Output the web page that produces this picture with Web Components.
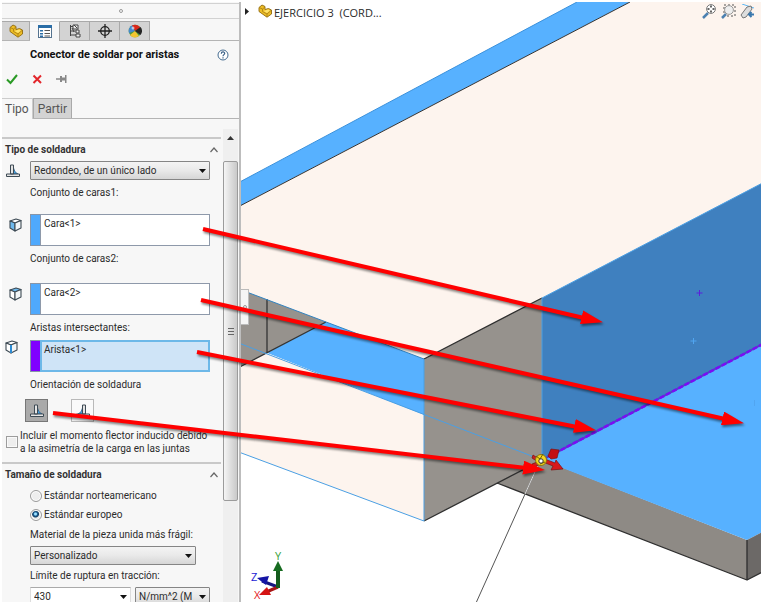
<!DOCTYPE html>
<html lang="es">
<head>
<meta charset="utf-8">
<title>Conector de soldar por aristas</title>
<style>
body{margin:0;background:#fff;font:10px/14px Roboto,"Open Sans",sans-serif;color:#2b2b2b}
</style>
</head>
<body>
<weld-app></weld-app>
<script>
function define(name, css, html) {
  const t = document.createElement('template');
  t.innerHTML = `<style>*{box-sizing:border-box}button,input,select,textarea{font:inherit;color:inherit;margin:0}button{padding:0;border:0;background:none}svg{display:block}${css}</style>${html}`;
  customElements.define(name, class extends HTMLElement {
    constructor() {
      super();
      const root = this.attachShadow({mode: 'open'});
      root.append(t.content.cloneNode(true));
      root.querySelectorAll('[data-attr]').forEach(e => {
        e.textContent = this.getAttribute(e.dataset.attr) || '';
      });
    }
  });
}

define('part-icon', `:host{display:block;width:14px;height:14px}`, `
<svg width="14" height="14" viewBox="0 0 14 14"><path d="M1 3.500 4 1l3 1.500v3l3.500-1L13.500 6v4L9 13.200 1 7.500z" fill="#edbd25" stroke="#8e6a10" stroke-width=".9"/><path d="M1.500 3.700 4.500 5v2.500L9 10l4-3.500M9 10v3M4.500 5 7 3" fill="none" stroke="#a87d12" stroke-width=".8"/><path d="m5.500 7 3.500 2 3-2.500-2-1z" fill="#ffe36b"/></svg>`);

define('manager-tabs', `
:host{display:flex;border-bottom:1px solid #b4b4b4;height:20px}
button{width:30px;height:19px;display:grid;place-items:center;background:#d3d3d3;border:1px solid #a9a9a9;border-left:0;border-bottom:0}
button:first-of-type{width:28px}
button.on{background:#f7f7f7;height:20px;border-top-color:#ddd}`, `
<button aria-label="Operaciones"><part-icon></part-icon></button>
<button class="on" aria-label="Propiedades"><svg width="14" height="13" viewBox="0 0 14 13"><rect x=".5" y=".5" width="13" height="12" fill="#fff" stroke="#55738f"/><path d="M0 0h14v3H0z" fill="#2a6da6"/><path d="M2 5h3v1.500H2zm0 3h3v1.500H2zm0 2.500h3V12H2z" fill="#2b6ea7"/><path d="M6.500 5.500H12M6.500 8.500H12M6.500 11H12" stroke="#555"/></svg></button>
<button aria-label="Configuraciones"><svg width="14" height="14" viewBox="0 0 14 14" fill="none" stroke="#444"><path d="M2.500 1v11M2.500 2.500H5M2.500 7h5M2.500 11H8"/><path d="M5 1h5v4H5zM8 6h3v3H8zM8 10h4v3H8z" fill="#eee"/><path d="m4 4 2 4M6 1l3 3"/></svg></button>
<button aria-label="Cotas"><svg width="14" height="14" viewBox="0 0 14 14" fill="none" stroke="#222" stroke-width="1.300"><circle cx="7" cy="7" r="4.300"/><path d="M7 0v14M0 7h14"/></svg></button>
<button aria-label="Visualización"><svg width="14" height="14" viewBox="0 0 14 14"><circle cx="7" cy="7" r="6.300" fill="#4c9a40"/><path d="M7 7 1 9A6.300 6.300 0 0 1 5 1z" fill="#4488cf"/><path d="M7 7 4 1.500A6.300 6.300 0 0 1 12.500 4z" fill="#d9291c"/><path d="M7 7 2 11a6.300 6.300 0 0 0 9 1z" fill="#f2c632"/><path d="m7 7 5.500-4a6 6 0 0 1 0 8z" fill="#252525"/><circle cx="5" cy="4" r="1.500" fill="#fff" opacity=".6"/></svg></button>`);

define('panel-header', `
:host{display:block}
.grip{height:16px;margin:1px 0 2px;border:solid #d2d2d2;border-width:1px 0;display:grid;place-items:center}
.grip i{width:4px;height:4px;border:1px solid #999;border-radius:50%}
.title{display:flex;align-items:center;justify-content:space-between;padding:0 10px 0 28px;height:28px}
h1{font-size:11px;line-height:16px;margin:0;color:#111}
.act{display:flex;align-items:center;gap:13px;height:20px;padding-left:4px}
.tabs{display:flex;height:21px;margin-top:9px;border-bottom:1px solid #b4b4b4;font-size:12px;color:#555}
.tabs button{height:20px;border:1px solid #a9a9a9;border-bottom:0;background:#d3d3d3;padding:0 4px}
.tabs .on{height:21px;background:#f7f7f7;border-left:0;border-color:#ccc;padding:0 3px}`, `
<div class="grip"><i></i></div>
<manager-tabs></manager-tabs>
<div class="title"><h1>Conector de soldar por aristas</h1>
<button aria-label="Ayuda"><svg width="12" height="12" viewBox="0 0 12 12" fill="none"><circle cx="6" cy="6" r="5" fill="#fff" stroke="#456c91"/><path d="M4.300 4.700C4.300 2.300 7.800 2.500 7.700 4.500 7.600 5.700 6 5.600 6 7.200M6 8.300v1.200" stroke="#365d84" stroke-width="1.200"/></svg></button></div>
<div class="act">
<button aria-label="Aceptar"><svg width="12" height="12" viewBox="0 0 12 12"><path d="m1 6.500 3.500 3.500L11 2" fill="none" stroke="#2a9a25" stroke-width="2"/></svg></button>
<button aria-label="Cancelar"><svg width="12" height="12" viewBox="0 0 12 12"><path d="m2.500 2.500 7.500 7.500M10 2.500 2.500 10" stroke="#e3262b" stroke-width="2"/></svg></button>
<button aria-label="Fijar"><svg width="12" height="10" viewBox="0 0 12 10"><path d="M0 5h5" stroke="#888" stroke-width="1.500"/><path d="M4 2h2v1.500h3V1h1.500v8H9V6.500H6V8H4z" fill="#888"/></svg></button></div>
<div class="tabs"><button class="on">Tipo</button><button>Partir</button></div>`);

define('panel-group', `
:host{display:block;border-top:2px solid #c9c9c9}
header{display:flex;align-items:center;justify-content:space-between;height:22px;padding:0 3px}
h2{font-size:10px;line-height:14px;margin:0;color:#333}`, `
<header><h2><slot name="title"></slot></h2><button aria-label="Contraer"><svg width="8" height="6" viewBox="0 0 8 6"><path d="m.5 5 3.500-4 3.500 4" fill="none" stroke="#666" stroke-width="1.200"/></svg></button></header>
<slot></slot>`);

define('weld-icon', `:host{display:block;width:14px;height:14px}:host([flip]) svg{transform:scaleX(-1)}`, `
<svg width="14" height="14" viewBox="0 0 14 14"><path d="M7.500 4C8.500 7 9.500 9 12 10H7.500z" fill="#48a6e8" stroke="#245c85" stroke-width=".8"/><path d="M4.500 1h3v9h-3zM.5 10h13v2.500H.5z" fill="#e5e5e5" stroke="#3e4b55"/></svg>`);

define('cube-icon', `:host{display:block;width:13px;height:14px}
.t,.l{fill:#fff}:host([face=top]) .t,:host([face=left]) .l{fill:#6eb9ed}
.e{display:none}:host([face=edge]) .e{display:block}`, `
<svg width="13" height="14" viewBox="0 0 13 14" stroke="#3e4b55" stroke-width="1.100" stroke-linejoin="round"><path class="t" d="M1 3 7 1l5 1.500L6 5z"/><path class="l" d="m1 3 5 2v8L1 10z"/><path d="m6 5 6-2.500V10l-6 3z" fill="#f1f5f7"/><path class="e" d="M6 5v8" stroke="#2b8bd3" stroke-width="2"/></svg>`);

define('drop-down', `
:host{display:grid}
select,svg{grid-area:1/1}
select{appearance:none;height:19px;width:100%;border:1px solid #858585;border-radius:1px;background:linear-gradient(#f4f4f4,#e9e9e9 50%,#d6d6d6);padding:0 3px;outline:0}
svg{align-self:center;justify-self:end;margin-right:4px;pointer-events:none}`, `
<select aria-label="Opciones"><option data-attr="value"></option></select>
<svg width="7" height="4" viewBox="0 0 7 4"><path d="M0 0h7L3.500 4z" fill="#111"/></svg>`);

define('selection-box', `
:host{display:block;--mark:#4fa9fd}
:host([active]){--mark:#8000ff}
label{display:block;margin:6px 0 var(--gap,14px) 28px}
.row{display:flex;margin-left:28px;height:32px}
.icon{width:0;display:flex;justify-content:flex-end;align-items:flex-start}
.icon slot{display:block}
::slotted(*){margin:4px 8px 0 0}
:host([active]) ::slotted(*){margin:0 12px 0 0}
.bar{width:10px;background:var(--mark);border:1px solid #8795a8;border-right:0}
textarea{flex:1;min-width:0;resize:none;border:1px solid #8e99aa;background:#fff;padding:2px 3px;outline:0;overflow:hidden}
:host([active]) textarea{background:#cfe4f7;border:2px solid #6db8e8;padding:1px 2px}`, `
<label for="t" data-attr="label"></label>
<div class="row"><span class="icon"><slot></slot></span><span class="bar"></span><textarea id="t" readonly data-attr="value"></textarea></div>`);

define('weld-type', `
:host{display:block;padding-right:11px}
.type{display:flex;align-items:center}
weld-icon{margin:0 10px 0 4px}
drop-down{flex:1}
selection-box:nth-of-type(2){--gap:17px}
selection-box:nth-of-type(3){--gap:5px}
p{margin:6px 0 7px 28px}
.orient{display:flex;gap:23px;margin-left:23px}
.orient button{width:23px;height:23px;border:1px solid #b9b9b9;background:#fafafa;display:grid;place-items:center}
.orient weld-icon{margin:0}
.orient .on{background:#aaa;border-color:#777}
.check{display:flex;align-items:center;gap:2px;margin:7px -11px 7px 4px;line-height:13px}
.check input{appearance:none;width:12px;height:12px;flex:none;border:1px solid #9d9d9d;background:#eee;box-shadow:inset 0 0 0 1px #fafafa}`, `
<div class="type"><weld-icon></weld-icon><drop-down value="Redondeo, de un único lado"></drop-down></div>
<selection-box label="Conjunto de caras1:" value="Cara&lt;1&gt;"><cube-icon face="left"></cube-icon></selection-box>
<selection-box label="Conjunto de caras2:" value="Cara&lt;2&gt;"><cube-icon face="top"></cube-icon></selection-box>
<selection-box active label="Aristas intersectantes:" value="Arista&lt;1&gt;"><cube-icon face="edge"></cube-icon></selection-box>
<p>Orientación de soldadura</p>
<div class="orient"><button class="on" aria-label="Derecha"><weld-icon></weld-icon></button><button aria-label="Izquierda"><weld-icon flip></weld-icon></button></div>
<div class="check"><input type="checkbox" id="m"><label for="m">Incluir el momento flector inducido debido<br>a la asimetría de la carga en las juntas</label></div>`);

define('weld-size', `
:host{display:block;padding:0 11px 0 28px}
.r{display:flex;align-items:center;gap:2px;height:19px}
.r input{appearance:none;width:12px;height:12px;border:1px solid #9b9b9b;border-radius:50%;background:#eee;box-shadow:inset 0 0 0 1px #fff}
.r input:checked{background:radial-gradient(circle at 45% 40%,#9be0ff 0 1px,#1a5f94 2px,#123c62 3px,#e8e8e8 4px)}
.l{display:block;margin:4px 0}
.mat{margin-right:14px}
.val{display:flex;gap:4px}
.in{display:flex;width:101px;height:19px;background:#fff;border:1px solid #ddd;border-top-color:#aaa;align-items:center;padding-right:3px}
.in input{flex:1;min-width:0;border:0;background:none;padding:0 3px;outline:0}
.val drop-down{flex:1}`, `
<div class="r"><input type="radio" name="s" id="a"><label for="a">Estándar norteamericano</label></div>
<div class="r"><input type="radio" name="s" id="b" checked><label for="b">Estándar europeo</label></div>
<span class="l">Material de la pieza unida más frágil:</span>
<drop-down class="mat" value="Personalizado"></drop-down>
<label class="l" for="n">Límite de ruptura en tracción:</label>
<div class="val"><span class="in"><input id="n" value="430"><button aria-label="Valores"><svg width="7" height="4" viewBox="0 0 7 4"><path d="M0 0h7L3.500 4z" fill="#111"/></svg></button></span><drop-down value="N/mm^2 (M"></drop-down></div>`);

define('scroll-bar', `
:host{display:flex;flex-direction:column;width:15px;background:#efefef;align-items:center}
button{height:32px;width:15px;display:grid;place-items:start center;padding-top:7px}
.thumb{width:15px;height:340px;border:1px solid #9b9b9b;border-radius:2px;background:linear-gradient(90deg,#f5f5f5,#dedede 50%,#c9c9c9);display:grid;place-items:center}`, `
<button aria-label="Subir"><svg width="7" height="4" viewBox="0 0 7 4"><path d="M0 4h7L3.500 0z" fill="#333"/></svg></button>
<div class="thumb"><svg width="6" height="8" viewBox="0 0 6 8"><path d="M0 1.500h6M0 4.500h6M0 7.500h6" stroke="#666"/></svg></div>`);

define('property-panel', `
:host{display:flex;flex-direction:column;min-height:0;overflow:hidden;background:#f7f7f7;border-right:2px solid #bdbdbd}
.scroll{flex:1;min-height:0;display:flex;overflow:hidden;margin-top:10px}
.body{flex:1;min-width:0;padding:8px 2px 0 0}
scroll-bar{margin-right:1px}`, `
<panel-header></panel-header>
<div class="scroll"><div class="body">
<panel-group><span slot="title">Tipo de soldadura</span><weld-type></weld-type></panel-group>
<panel-group><span slot="title">Tamaño de soldadura</span><weld-size></weld-size></panel-group>
</div><scroll-bar></scroll-bar></div>`);

define('model-view', `
:host{display:block;position:relative;overflow:hidden;background:#fff}
.scene{position:absolute;inset:0;width:100%;height:100%}
.bar{position:relative;display:flex;justify-content:space-between;padding:2px 6px 0 4px}
.tree,.tools{display:flex;align-items:flex-start}
.tree part-icon{margin:0 2px 0 9px}
.tree > svg{margin-top:4px}
.name{font:11px/18px "Open Sans",sans-serif;white-space:pre}
.tools{gap:4px}
.handle{position:absolute;left:-1px;top:287px;width:9px;height:36px;background:#f5f5f5;border:1px solid #bbb;display:grid;place-items:center}
.handle i{width:4px;height:4px;border:1px solid #999;border-radius:50%}`, `
<svg class="scene"><g transform="translate(-241 -2)" stroke-linejoin="round">
<path d="M236 184 577 2h53L236 208z" fill="#57b1ff"/>
<path d="M236 208 630 2h1500v-530L542 298 424 359 236 288z" fill="#fdf4ee"/>
<path d="M236 208 630 2" stroke="#333"/>
<path d="M236 184 577 2" stroke="#3a91dc"/>
<path d="M236 288 326 322 267 353 236 369z" fill="#96928d"/>
<path d="M326 322 424 359v56L267 353z" fill="#57b1ff"/>
<path d="M236 369 267 353 424 415v106L236 451z" fill="#fdf4ee"/>
<path d="M326 322 236 369M267 299v54" stroke="#333" fill="none" stroke-width="1.300"/>
<path d="m236 288 188 71" stroke="#3283c0"/>
<path d="m424 521 73-38 45-23V298l-118 61z" fill="#96928d"/>
<path d="m497 483 45-25 22 10 183 72v40z" fill="#8e8a85"/>
<path d="M542 298 2130-530V-374L542 460z" fill="#3f80bf"/>
<path d="M542 460 2130-374V-180L747 540z" fill="#57b1ff"/>
<path d="M747 540 2130-180V-140L747 580z" fill="#6c6967"/>
<path d="m424 359 118-61M424 521l118-61M497 483l250 97v-40M747 580 2130-140" stroke="#2f2f2f" fill="none" stroke-width="1.300"/>
<path d="M236 342 542 460M236 451l188 70V359M542 460V298L2130-530" stroke="#4b9fe3" fill="none"/>
<path d="M542 460 2130-374" stroke="#4f43c5" stroke-width="2"/>
<path d="M542 460 2130-374" stroke="#7a0cf5" stroke-width="2.500" stroke-dasharray="5 2"/>
<path d="M699.500 290v6m-3-3h6" stroke="#5a20dc"/>
<path d="M693.500 338v6m-3-3h6M754.500 400v6" stroke="#51a5f0"/>
<path d="m539 463-63 140" stroke="#555"/><path d="m539 463-14 31" stroke="#ddd"/>
<g stroke="#7e1010" stroke-width=".7"><path d="m548 456 3-7 8 1-2 8-6 1z" fill="#c40f13"/><path d="m545 459 10 4 1-3 7 9-12 1 2-4-10-4z" fill="#d7191c"/><path d="m533 455 6 4-1 3-6-4zM532 464l8-3 1 3-7 3z" fill="#c92023"/></g>
<circle cx="541" cy="460" r="5.500" fill="#f4d51d" stroke="#8a7710"/>
<path d="m536 456 4 3 3-5M540 464l5-2" stroke="#725f09" fill="none"/><circle cx="541" cy="461" r="2.200" fill="#fff" stroke="#333"/>
<g stroke-width="3"><path d="m278 587-16-6" stroke="#16167f"/><path d="m278 587-14 6" stroke="#a81515"/><path d="M278 588v-20" stroke="#155b1d" stroke-width="4"/></g>
<path d="m257 578 12-2-3 9z" fill="#1515a5"/><path d="m259 595 8-8 4 8z" fill="#d51414"/><path d="m273 571 5-10 5 10z" fill="#176c20"/>
<g font-size="11" font-family="Open Sans"><text x="275" y="560" fill="#37a037">Y</text><text x="251" y="581" fill="#2424d5">Z</text><text x="254" y="599" fill="#e32222">X</text></g>
</g></svg>
<div class="bar"><div class="tree"><svg width="4" height="7" viewBox="0 0 4 7"><path d="M0 0v7l4-3.500z" fill="#222"/></svg><part-icon></part-icon><span class="name">EJERCICIO 3  (CORD...</span></div>
<div class="tools">
<button aria-label="Zoom ajustado"><svg width="15" height="15" viewBox="0 0 15 15"><path d="m1 14 5-5" stroke="#4c81b1" stroke-width="2.500"/><circle cx="9" cy="5" r="4.400" fill="#fff" stroke="#777"/><path d="M9 1.500v2M9 6.500v2M5.500 5h2M10.500 5h2" stroke="#333" stroke-width="1.500"/></svg></button>
<button aria-label="Zoom de área"><svg width="15" height="15" viewBox="0 0 15 15"><path d="M3 1h11v11H3z" fill="none" stroke="#555" stroke-dasharray="2 2"/><path d="m1 14 4-4" stroke="#4c81b1" stroke-width="2.500"/><circle cx="8" cy="6" r="4.400" fill="#eee" stroke="#999"/></svg></button>
<button aria-label="Vista previa"><svg width="15" height="15" viewBox="0 0 15 15"><path d="M2 0 14 4" stroke="#62b8f2"/><path d="m1 11 6-8 4-1 1 3-6 8-3 1z" fill="#ddd" stroke="#777"/><path d="M14 10.500H9M11.500 8 9 10.500l2.500 2.500" stroke="#3a78ae" stroke-width="2" fill="none"/></svg></button></div></div>
<div class="handle"><i></i></div>`);

define('callout-arrows', `
:host{position:absolute;inset:0;pointer-events:none;overflow:hidden}
svg{width:100%;height:100%;filter:drop-shadow(1px 2px 1px #0007)}`, `
<svg><defs><marker id="h" markerUnits="userSpaceOnUse" markerWidth="22" markerHeight="14" refX="21" refY="7" orient="auto"><path d="M0 0 22 7 0 14z" fill="#f00"/></marker></defs>
<g stroke="#f00" stroke-width="4"><path d="m203 229 381 89"/><path d="m201 300 524 119"/><path d="m197 352 380 75"/><path d="m53 413 473 55"/></g>
<g fill="none" marker-end="url(#h)"><path d="M203 229 602 322"/><path d="M201 300 743 423"/><path d="M197 352 595 430"/><path d="M53 413 544 470"/></g></svg>`);

define('weld-app', `
:host{display:grid;grid-template-columns:239px 1fr;grid-template-rows:minmax(0,1fr);height:100vh;padding:2px;position:relative;overflow:hidden;box-sizing:border-box}`, `
<property-panel></property-panel><model-view></model-view><callout-arrows></callout-arrows>`);
</script>
</body>
</html>
